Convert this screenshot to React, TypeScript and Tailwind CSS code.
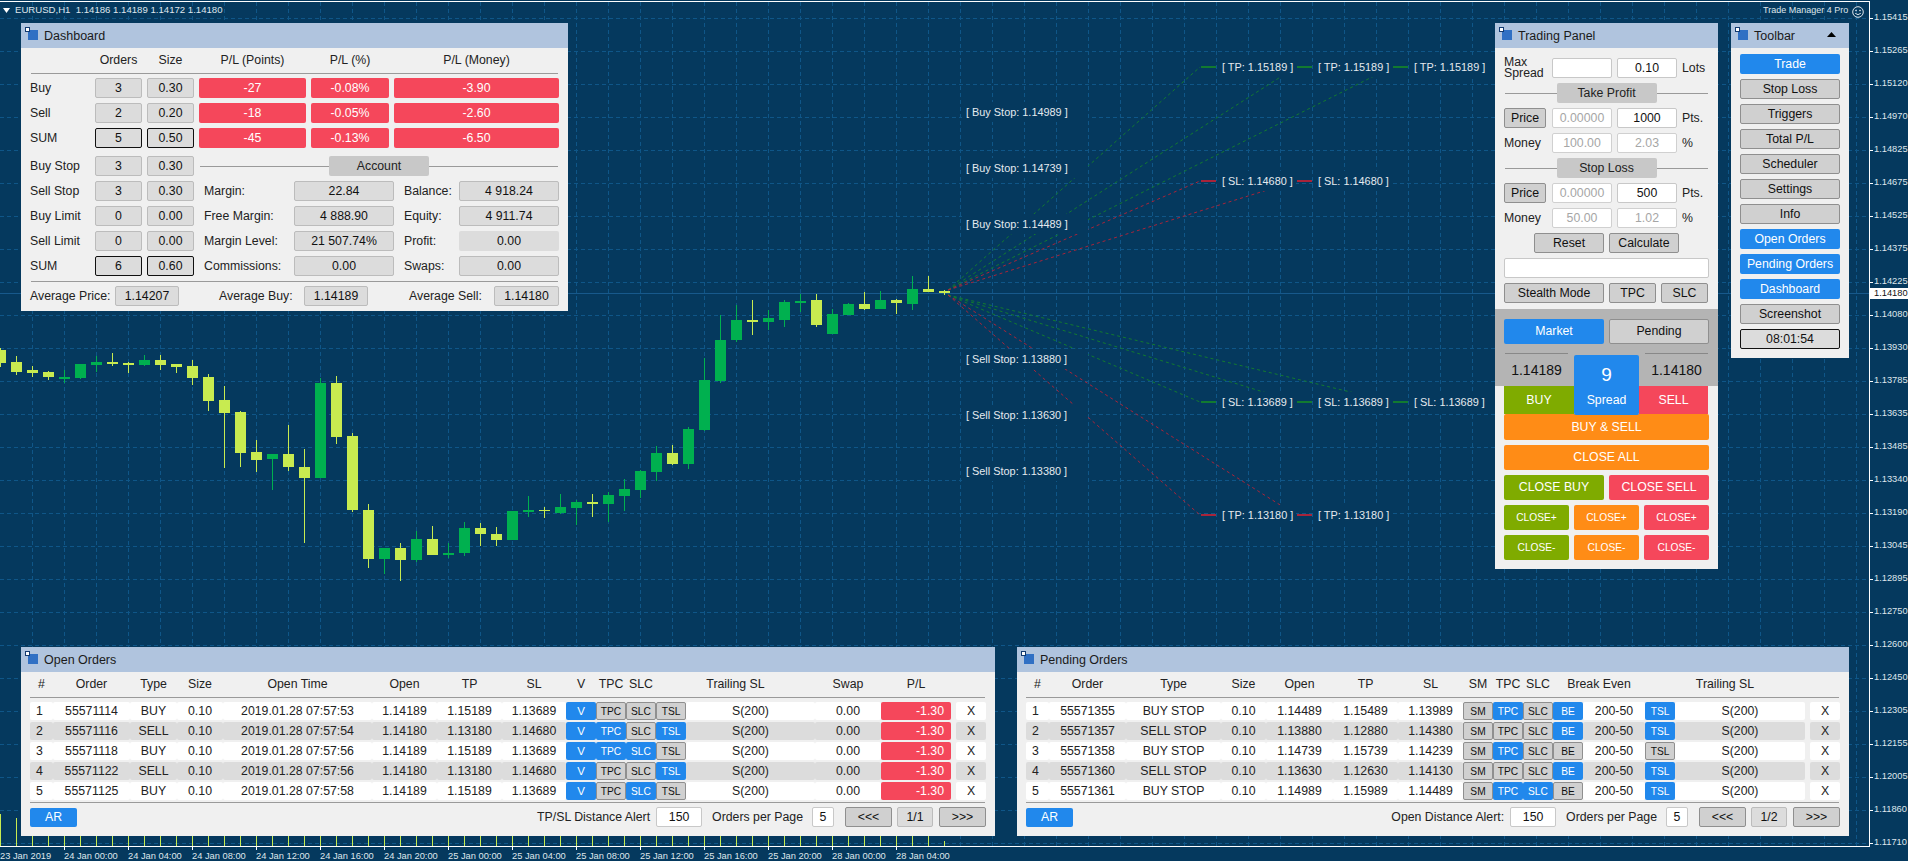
import type { ReactNode } from "react";

const BLUE = "bg-[#2188ec] text-white";
const GRAY_BTN = "bg-[#d0d0d0] border border-[#8f8f8f] text-[#111]";
const CELL = "bg-[#dcdcdc] border border-[#bcbcbc] text-[#111]";
const SUM = "bg-[#dcdcdc] border border-[#111] text-[#111]";
const RED = "bg-[#f5475b] text-white";
const INPUT = "bg-white border border-[#c8c8c8] text-[#111]";
const DIM = "bg-white border border-[#d0d0d0] text-[#a6a6a6]";

const BOX = "flex items-center justify-center rounded-[2px] min-w-0 whitespace-nowrap";

function Box({ c, children }: { c: string; children?: ReactNode }) {
  return <div className={`${BOX} ${c}`}>{children}</div>;
}

// [color, wickTop, bodyTop, bodyBottom, wickBottom], one candle every 16px
const candles: [string, number, number, number, number][] = [
  ["y", 348, 350, 363, 367], ["y", 356, 362, 372, 375], ["y", 366, 370, 373, 377], ["y", 371, 372, 377, 380],
  ["g", 370, 377, 379, 383], ["g", 364, 364, 378, 379], ["g", 356, 362, 365, 372], ["y", 353, 362, 364, 366],
  ["y", 362, 363, 365, 373], ["g", 355, 360, 365, 366], ["y", 355, 360, 365, 370], ["y", 364, 364, 367, 373],
  ["y", 360, 366, 378, 385], ["y", 374, 377, 401, 411], ["y", 386, 400, 413, 468], ["y", 411, 412, 453, 467],
  ["y", 440, 452, 460, 472], ["g", 454, 454, 459, 490], ["y", 425, 454, 467, 471], ["y", 449, 467, 478, 543],
  ["g", 378, 383, 478, 478], ["y", 376, 383, 437, 444], ["y", 433, 436, 510, 512], ["y", 504, 510, 559, 568],
  ["g", 548, 548, 559, 574], ["y", 543, 548, 560, 581], ["g", 531, 539, 560, 562], ["y", 526, 539, 555, 555],
  ["g", 543, 553, 555, 558], ["g", 522, 528, 553, 556], ["y", 523, 528, 534, 546], ["y", 527, 534, 540, 546],
  ["g", 511, 511, 540, 540], ["g", 496, 510, 512, 517], ["y", 507, 510, 511, 518], ["g", 494, 507, 513, 514],
  ["g", 500, 502, 508, 525], ["y", 494, 502, 504, 517], ["g", 492, 495, 504, 522], ["g", 479, 489, 496, 511],
  ["g", 470, 471, 490, 498], ["g", 446, 453, 472, 481], ["y", 445, 453, 464, 465], ["g", 427, 429, 464, 469],
  ["g", 358, 380, 430, 431], ["g", 315, 340, 381, 383], ["g", 305, 320, 340, 342], ["y", 300, 320, 322, 335],
  ["g", 310, 318, 322, 330], ["g", 300, 302, 320, 327], ["g", 294, 301, 303, 312], ["y", 294, 300, 325, 327],
  ["g", 309, 314, 334, 334], ["g", 303, 304, 315, 315], ["y", 292, 304, 309, 310], ["g", 291, 300, 309, 309],
  ["y", 299, 300, 303, 314], ["g", 276, 289, 304, 310], ["y", 276, 289, 292, 292], ["y", 290, 291, 293, 295],
];

const prices = [
  "1.15415", "1.15265", "1.15120", "1.14970", "1.14825", "1.14675", "1.14525", "1.14375", "1.14225",
  "1.14080", "1.13930", "1.13785", "1.13635", "1.13485", "1.13340", "1.13190", "1.13045", "1.12895",
  "1.12750", "1.12600", "1.12450", "1.12305", "1.12155", "1.12005", "1.11860", "1.11710",
];

const times = [
  "24 Jan 00:00", "24 Jan 04:00", "24 Jan 08:00", "24 Jan 12:00", "24 Jan 16:00", "24 Jan 20:00", "25 Jan 00:00",
  "25 Jan 04:00", "25 Jan 08:00", "25 Jan 12:00", "25 Jan 16:00", "25 Jan 20:00", "28 Jan 00:00", "28 Jan 04:00",
];

const GREEN_LINE = "#127a30";
const RED_LINE = "#a8243a";

const connectors: [number, number, number, number, string][] = [
  [948, 290, 1200, 67, GREEN_LINE], [948, 290, 1296, 67, GREEN_LINE], [948, 290, 1392, 67, GREEN_LINE],
  [948, 290, 1200, 181, RED_LINE], [948, 290, 1296, 181, RED_LINE],
  [948, 295, 1200, 402, GREEN_LINE], [948, 295, 1296, 402, GREEN_LINE], [948, 295, 1392, 402, GREEN_LINE],
  [948, 295, 1200, 515, RED_LINE], [948, 295, 1296, 515, RED_LINE],
];

const stubs: [number, number, string][] = [
  [1201, 67, GREEN_LINE], [1297, 67, GREEN_LINE], [1393, 67, GREEN_LINE],
  [1201, 181, RED_LINE], [1297, 181, RED_LINE],
  [1201, 402, GREEN_LINE], [1297, 402, GREEN_LINE], [1393, 402, GREEN_LINE],
  [1201, 515, RED_LINE], [1297, 515, RED_LINE],
];

const levelLabels: [number, number, number, string][] = [
  [966, 112, 122, "[ Buy Stop: 1.14989 ]"], [966, 168, 122, "[ Buy Stop: 1.14739 ]"], [966, 224, 122, "[ Buy Stop: 1.14489 ]"],
  [966, 359, 122, "[ Sell Stop: 1.13880 ]"], [966, 415, 122, "[ Sell Stop: 1.13630 ]"], [966, 471, 122, "[ Sell Stop: 1.13380 ]"],
  [1222, 67, 74, "[ TP: 1.15189 ]"], [1318, 67, 74, "[ TP: 1.15189 ]"], [1414, 67, 74, "[ TP: 1.15189 ]"],
  [1222, 181, 74, "[ SL: 1.14680 ]"], [1318, 181, 74, "[ SL: 1.14680 ]"],
  [1222, 402, 74, "[ SL: 1.13689 ]"], [1318, 402, 74, "[ SL: 1.13689 ]"], [1414, 402, 74, "[ SL: 1.13689 ]"],
  [1222, 515, 74, "[ TP: 1.13180 ]"], [1318, 515, 74, "[ TP: 1.13180 ]"],
];

function Chart() {
  const vx = Array.from({ length: 58 }, (_, i) => 32 * (i + 1));
  const hy = Array.from({ length: 26 }, (_, i) => 18 + 33 * i);
  return (
    <svg className="absolute top-0 left-0" width={1908} height={861} shapeRendering="crispEdges">
      {vx.map((x) => (
        <line key={x} x1={x + 0.5} y1={2} x2={x + 0.5} y2={846} stroke="#0f5688" strokeDasharray="4 3" />
      ))}
      {hy.map((y) => (
        <line key={y} x1={0} y1={y + 0.5} x2={1869} y2={y + 0.5} stroke="#0f5688" strokeDasharray="4 3" />
      ))}
      <rect x={0} y={293} width={1869} height={1} fill="#17598c" />
      {candles.map((_, i) => (
        <rect
          key={i}
          x={i * 16}
          y={i === 0 ? 814 : i === 1 ? 818 : i === 59 ? 841 : 830}
          width={1}
          height={i === 0 ? 32 : i === 1 ? 28 : i === 59 ? 5 : 16}
          fill="#c8eb50"
        />
      ))}
      <g shapeRendering="auto">
        {connectors.map(([x1, y1, x2, y2, color], i) => (
          <line key={i} x1={x1} y1={y1} x2={x2} y2={y2} stroke={color} strokeDasharray="3 3" />
        ))}
      </g>
      {stubs.map(([x, y, color], i) => (
        <rect key={i} x={x} y={y - 1} width={15} height={2} fill={color} />
      ))}
      {candles.map(([col, wt, bt, bb, wb], i) => {
        const fill = col === "y" ? "#c8eb50" : "#00b04f";
        const c = i * 16;
        return (
          <g key={i}>
            <rect x={c} y={wt} width={1} height={wb - wt} fill={fill} />
            <rect x={c - 5} y={bt} width={11} height={Math.max(bb - bt, 1)} fill={fill} />
          </g>
        );
      })}
      <rect x={0} y={1} width={1870} height={1} fill="#ffffff" />
      <rect x={1869} y={1} width={1} height={846} fill="#ffffff" />
      <rect x={0} y={846} width={1870} height={1} fill="#ffffff" />
      {hy.map((y) => (
        <rect key={y} x={1870} y={y} width={3} height={1} fill="#ffffff" />
      ))}
      {times.map((_, i) => (
        <rect key={i} x={64 * (i + 1)} y={847} width={1} height={3} fill="#ffffff" />
      ))}
    </svg>
  );
}

function AxisText() {
  return (
    <div className="text-[9.3px] text-[#dfe6ec]">
      {prices.map((p, i) => (
        <div key={p} className="absolute left-[1874px] leading-[12px]" style={{ top: 11 + 33 * i }}>
          {p}
        </div>
      ))}
      <div className="absolute left-[1870px] top-[288px] w-[38px] h-[11px] bg-white text-[#111] leading-[11px] pl-[4px]">1.14180</div>
      <div className="absolute left-0 top-[850px] leading-[12px]">23 Jan 2019</div>
      {times.map((t, i) => (
        <div key={t} className="absolute top-[850px] leading-[12px]" style={{ left: 64 * (i + 1) }}>
          {t}
        </div>
      ))}
    </div>
  );
}

function LevelLabels() {
  return (
    <div className="text-[10.9px] text-[#e4e9ee]">
      {levelLabels.map(([x, y, w, t], i) => (
        <div
          key={i}
          className="absolute h-[20px] bg-[#05395e] flex items-center whitespace-nowrap"
          style={{ left: x - 4, top: y - 10, width: w + 4 }}
        >
          <span className="pl-[4px]">{t}</span>
        </div>
      ))}
    </div>
  );
}

function WinIcon() {
  return (
    <svg width={14} height={14} className="absolute left-[4px] top-[4px]">
      <rect x={3} y={3} width={10} height={10} fill="#3070c4" />
      <rect x={0.5} y={0.5} width={4} height={4} fill="#ffffff" stroke="#123a70" />
    </svg>
  );
}

function Win({ c, title, children, extra }: { c: string; title: string; children: ReactNode; extra?: ReactNode }) {
  return (
    <div className={`absolute bg-[#f0f0f0] ${c}`}>
      <div className="relative h-[25px] bg-[#b0c4de] flex items-center pl-[23px] pt-px text-[12.5px] text-[#1a1a1a]">
        <WinIcon />
        {title}
        {extra}
      </div>
      {children}
    </div>
  );
}

function Rule({ c }: { c: string }) {
  return <div className={`h-px bg-[#9a9a9a] ${c}`} />;
}

function Dashboard() {
  const top: [string, string, string, string, string, string][] = [
    ["Buy", "3", "0.30", "-27", "-0.08%", "-3.90"],
    ["Sell", "2", "0.20", "-18", "-0.05%", "-2.60"],
    ["SUM", "5", "0.50", "-45", "-0.13%", "-6.50"],
  ];
  const left: [string, string, string][] = [
    ["Buy Stop", "3", "0.30"],
    ["Sell Stop", "3", "0.30"],
    ["Buy Limit", "0", "0.00"],
    ["Sell Limit", "0", "0.00"],
    ["SUM", "6", "0.60"],
  ];
  const account: [string, string, string, string][] = [
    ["Margin:", "22.84", "Balance:", "4 918.24"],
    ["Free Margin:", "4 888.90", "Equity:", "4 911.74"],
    ["Margin Level:", "21 507.74%", "Profit:", "0.00"],
    ["Commissions:", "0.00", "Swaps:", "0.00"],
  ];
  return (
    <Win c="left-[21px] top-[23px] w-[547px] h-[288px]" title="Dashboard">
      <div className="pl-[9px]">
        <div className="grid grid-cols-[60px_47px_47px_107px_78px_165px] gap-x-[5px] h-[25px] items-center text-center text-[#222]">
          <div />
          <div>Orders</div>
          <div>Size</div>
          <div>P/L (Points)</div>
          <div>P/L (%)</div>
          <div>P/L (Money)</div>
        </div>
        <Rule c="ml-[1px] w-[527px]" />
        <div className="grid grid-cols-[60px_47px_47px_107px_78px_165px] gap-x-[5px] gap-y-[5px] auto-rows-[20px] items-stretch mt-[4px]">
          {top.map((r) => (
            <div key={r[0]} className="contents">
              <div className="flex items-center">{r[0]}</div>
              <Box c={r[0] === "SUM" ? SUM : CELL}>{r[1]}</Box>
              <Box c={r[0] === "SUM" ? SUM : CELL}>{r[2]}</Box>
              <Box c={RED}>{r[3]}</Box>
              <Box c={RED}>{r[4]}</Box>
              <Box c={RED}>{r[5]}</Box>
            </div>
          ))}
        </div>
        <div className="flex gap-x-[5px] mt-[8px]">
          <div className="grid grid-cols-[60px_47px_47px] gap-x-[5px] gap-y-[5px] auto-rows-[20px]">
            {left.map((r, i) => (
              <div key={i} className="contents">
                <div className="flex items-center">{r[0]}</div>
                <Box c={r[0] === "SUM" ? SUM : CELL}>{r[1]}</Box>
                <Box c={r[0] === "SUM" ? SUM : CELL}>{r[2]}</Box>
              </div>
            ))}
          </div>
          <div className="w-[360px] flex flex-col gap-y-[5px]">
            <div className="h-[20px] flex items-center px-px">
              <div className="flex-1 h-px bg-[#9a9a9a]" />
              <div className="w-[100px] h-[20px] rounded-[2px] bg-[#c8c8c8] flex items-center justify-center">Account</div>
              <div className="flex-1 h-px bg-[#9a9a9a]" />
            </div>
            {account.map((r) => (
              <div key={r[0]} className="grid grid-cols-[90px_100px_65px_100px] pl-[5px] h-[20px]">
                <div className="flex items-center">{r[0]}</div>
                <Box c={CELL}>{r[1]}</Box>
                <div className="flex items-center pl-[10px]">{r[2]}</div>
                <Box c={r[2] === "Profit:" ? "bg-[#dcdcdc] text-[#111]" : CELL}>{r[3]}</Box>
              </div>
            ))}
          </div>
        </div>
        <Rule c="ml-[1px] w-[527px] mt-[5px]" />
        <div className="grid grid-cols-[85px_64px_125px_64px_126px_65px] h-[20px] mt-[4px]">
          <div className="flex items-center">Average Price:</div>
          <Box c={CELL}>1.14207</Box>
          <div className="flex items-center pl-[40px]">Average Buy:</div>
          <Box c={CELL}>1.14189</Box>
          <div className="flex items-center pl-[41px]">Average Sell:</div>
          <Box c={CELL}>1.14180</Box>
        </div>
      </div>
    </Win>
  );
}

function HeadLine({ label }: { label: string }) {
  return (
    <div className="flex items-center h-[20px] w-[203px] ml-px">
      <div className="flex-1 h-px bg-[#9a9a9a]" />
      <div className="w-[100px] h-[20px] rounded-[2px] bg-[#c8c8c8] flex items-center justify-center">{label}</div>
      <div className="flex-1 h-px bg-[#9a9a9a]" />
    </div>
  );
}

function InputRow({ first, a, b, dimA, dimB, unit }: { first: ReactNode; a: string; b: string; dimA?: boolean; dimB?: boolean; unit: string }) {
  return (
    <div className="flex h-[20px]">
      <div className="w-[48px] flex items-center">{first}</div>
      <Box c={`w-[60px] ${dimA ? DIM : INPUT}`}>{a}</Box>
      <Box c={`w-[60px] ml-[5px] ${dimB ? DIM : INPUT}`}>{b}</Box>
      <div className="ml-[5px] flex items-center">{unit}</div>
    </div>
  );
}

function TradingPanel() {
  const price = <Box c={`w-[42px] h-[20px] ${GRAY_BTN}`}>Price</Box>;
  return (
    <Win c="left-[1495px] top-[23px] w-[223px] h-[546px]" title="Trading Panel">
      <div className="pl-[9px] pt-[10px] flex flex-col gap-y-[5px]">
        <InputRow first={<div className="leading-[11px]">Max<br />Spread</div>} a="" b="0.10" unit="Lots" />
        <HeadLine label="Take Profit" />
        <InputRow first={price} a="0.00000" b="1000" dimA unit="Pts." />
        <InputRow first="Money" a="100.00" b="2.03" dimA dimB unit="%" />
        <HeadLine label="Stop Loss" />
        <InputRow first={price} a="0.00000" b="500" dimA unit="Pts." />
        <InputRow first="Money" a="50.00" b="1.02" dimA dimB unit="%" />
        <div className="flex gap-x-[5px] h-[20px] pl-[30px]">
          <Box c={`w-[70px] ${GRAY_BTN}`}>Reset</Box>
          <Box c={`w-[70px] ${GRAY_BTN}`}>Calculate</Box>
        </div>
        <Box c={`w-[205px] h-[20px] ${INPUT}`} />
        <div className="flex gap-x-[5px] h-[20px]">
          <Box c={`w-[100px] ${GRAY_BTN}`}>Stealth Mode</Box>
          <Box c={`w-[47px] ${GRAY_BTN}`}>TPC</Box>
          <Box c={`w-[47px] ${GRAY_BTN}`}>SLC</Box>
        </div>
      </div>
      <div className="mt-[6px] h-[77px] bg-[#b4b4b4] pt-[10px]">
        <div className="flex gap-x-[5px] h-[25px] pl-[9px]">
          <Box c={`w-[100px] ${BLUE}`}>Market</Box>
          <Box c={`w-[100px] ${GRAY_BTN}`}>Pending</Box>
        </div>
        <div className="flex justify-between px-[10px] mt-[9px]">
          <div className="w-[63px] border-t border-[#888] text-center text-[14px] leading-[32px] text-[#111]">1.14189</div>
          <div className="w-[63px] border-t border-[#888] text-center text-[14px] leading-[32px] text-[#111]">1.14180</div>
        </div>
      </div>
      <div className="flex justify-between pl-[9px] pr-[10px] h-[28px]">
        <div className={`w-[70px] flex items-center justify-center bg-[#7fab00] text-white`}>BUY</div>
        <div className={`w-[69px] flex items-center justify-center ${RED}`}>SELL</div>
      </div>
      <div className="pl-[9px] flex flex-col gap-y-[5px]">
        <Box c="w-[205px] h-[26px] bg-[#ff8c16] text-white">BUY &amp; SELL</Box>
        <Box c="w-[205px] h-[25px] bg-[#ff8c16] text-white">CLOSE ALL</Box>
        <div className="flex gap-x-[5px] h-[25px]">
          <Box c="w-[100px] bg-[#7fab00] text-white">CLOSE BUY</Box>
          <Box c={`w-[100px] ${RED}`}>CLOSE SELL</Box>
        </div>
        {["CLOSE+", "CLOSE-"].map((t) => (
          <div key={t} className="flex gap-x-[5px] h-[25px] text-[10.2px]">
            <Box c="w-[65px] bg-[#7fab00] text-white">{t}</Box>
            <Box c="w-[65px] bg-[#ff8c16] text-white">{t}</Box>
            <Box c={`w-[65px] ${RED}`}>{t}</Box>
          </div>
        ))}
      </div>
      <div className="absolute left-[79px] top-[332px] w-[65px] h-[60px] rounded-[2px] bg-[#2188ec] text-white flex flex-col items-center">
        <div className="text-[19px] leading-[22px] mt-[9px]">9</div>
        <div className="leading-[14px] mt-[7px]">Spread</div>
      </div>
    </Win>
  );
}

function Toolbar() {
  const items: [string, boolean][] = [
    ["Trade", true], ["Stop Loss", false], ["Triggers", false], ["Total P/L", false], ["Scheduler", false], ["Settings", false],
    ["Info", false], ["Open Orders", true], ["Pending Orders", true], ["Dashboard", true], ["Screenshot", false],
  ];
  return (
    <Win
      c="left-[1731px] top-[23px] w-[118px] h-[335px]"
      title="Toolbar"
      extra={
        <svg width={9} height={5} className="absolute left-[96px] top-[9px]">
          <polygon points="0,5 4.5,0 9,5" fill="#000" />
        </svg>
      }
    >
      <div className="pl-[9px] pt-[6px] flex flex-col gap-y-[5px]">
        {items.map(([t, on]) => (
          <Box key={t} c={`w-[100px] h-[20px] ${on ? BLUE : GRAY_BTN}`}>{t}</Box>
        ))}
        <Box c={`w-[100px] h-[20px] ${SUM}`}>08:01:54</Box>
      </div>
    </Win>
  );
}

const SMALL_ON = "bg-[#2188ec] text-white text-[10.2px]";
const SMALL_OFF = "bg-[#d0d0d0] border border-[#8f8f8f] text-[#111] text-[10.2px]";

function Small({ on, t }: { on: boolean; t: string }) {
  return <Box c={on ? SMALL_ON : SMALL_OFF}>{t}</Box>;
}

function Txt({ bg, c, children }: { bg: string; c?: string; children: ReactNode }) {
  return <div className={`${BOX} ${bg} ${c ?? ""}`}>{children}</div>;
}

function Footer({ alert, page }: { alert: string; page: string }) {
  return (
    <div className="flex items-center mt-[4px] h-[20px]">
      <Box c={`w-[47px] h-[19px] ${BLUE}`}>AR</Box>
      <div className="ml-auto flex items-center h-[20px]">
        <div className="mr-[6px]">{alert}</div>
        <Box c={`w-[46px] h-[20px] ${INPUT}`}>150</Box>
        <div className="ml-[10px] mr-[9px]">Orders per Page</div>
        <Box c={`w-[22px] h-[20px] ${INPUT}`}>5</Box>
        <Box c={`w-[47px] h-[20px] ml-[11px] ${GRAY_BTN}`}>&lt;&lt;&lt;</Box>
        <Box c={`w-[36px] h-[20px] ml-[5px] ${CELL}`}>{page}</Box>
        <Box c={`w-[47px] h-[20px] ml-[6px] ${GRAY_BTN}`}>&gt;&gt;&gt;</Box>
      </div>
    </div>
  );
}

const openCols = "grid grid-cols-[23px_77px_47px_46px_149px_65px_65px_64px_30px_30px_30px_30px_129px_66px_70px_5px_30px]";

function OpenOrders() {
  const rows: [string, string, string, string, string, string, string, boolean, boolean, boolean][] = [
    ["55571114", "BUY", "2019.01.28 07:57:53", "1.14189", "1.15189", "1.13689", "1", false, false, false],
    ["55571116", "SELL", "2019.01.28 07:57:54", "1.14180", "1.13180", "1.14680", "2", true, false, true],
    ["55571118", "BUY", "2019.01.28 07:57:56", "1.14189", "1.15189", "1.13689", "3", true, true, false],
    ["55571122", "SELL", "2019.01.28 07:57:56", "1.14180", "1.13180", "1.14680", "4", false, false, true],
    ["55571125", "BUY", "2019.01.28 07:57:58", "1.14189", "1.15189", "1.13689", "5", false, true, false],
  ];
  return (
    <Win c="left-[21px] top-[647px] w-[974px] h-[189px]" title="Open Orders">
      <div className="pl-[9px] w-[965px]">
        <div className={`${openCols} h-[25px] items-center text-center text-[#222]`}>
          <div>#</div>
          <div>Order</div>
          <div>Type</div>
          <div>Size</div>
          <div>Open Time</div>
          <div>Open</div>
          <div>TP</div>
          <div>SL</div>
          <div>V</div>
          <div>TPC</div>
          <div>SLC</div>
          <div />
          <div className="pr-[30px]">Trailing SL</div>
          <div>Swap</div>
          <div>P/L</div>
          <div />
          <div />
        </div>
        <Rule c="w-[955px]" />
        <div className="flex flex-col gap-y-[4px] mt-[4px]">
          {rows.map((r, i) => {
            const bg = i % 2 ? "bg-[#dcdcdc]" : "bg-white";
            return (
              <div key={r[0]} className={`${openCols} h-[16px]`}>
                <Txt bg={bg} c="!justify-start pl-[6px]">{r[6]}</Txt>
                <Txt bg={bg}>{r[0]}</Txt>
                <Txt bg={bg}>{r[1]}</Txt>
                <Txt bg={bg}>0.10</Txt>
                <Txt bg={bg}>{r[2]}</Txt>
                <Txt bg={bg}>{r[3]}</Txt>
                <Txt bg={bg}>{r[4]}</Txt>
                <Txt bg={bg}>{r[5]}</Txt>
                <Box c="bg-[#2188ec] text-white text-[11.5px]">V</Box>
                <Small on={r[7]} t="TPC" />
                <Small on={r[8]} t="SLC" />
                <Small on={r[9]} t="TSL" />
                <Txt bg={bg}>S(200)</Txt>
                <Txt bg={bg}>0.00</Txt>
                <div className={`${BOX} ${RED} !justify-end pr-[7px]`}>-1.30</div>
                <div />
                <Txt bg={bg}>X</Txt>
              </div>
            );
          })}
        </div>
        <Rule c="w-[955px] mt-[4px]" />
        <Footer alert="TP/SL Distance Alert" page="1/1" />
      </div>
    </Win>
  );
}

const pendCols = "grid grid-cols-[23px_77px_95px_45px_67px_65px_65px_30px_30px_30px_30px_62px_30px_130px_5px_30px]";

function PendingOrders() {
  const rows: [string, string, string, string, string, boolean, boolean, boolean, boolean][] = [
    ["55571355", "BUY STOP", "1.14489", "1.15489", "1.13989", true, false, true, true],
    ["55571357", "SELL STOP", "1.13880", "1.12880", "1.14380", false, false, true, true],
    ["55571358", "BUY STOP", "1.14739", "1.15739", "1.14239", true, false, false, false],
    ["55571360", "SELL STOP", "1.13630", "1.12630", "1.14130", false, false, true, true],
    ["55571361", "BUY STOP", "1.14989", "1.15989", "1.14489", true, true, false, true],
  ];
  return (
    <Win c="left-[1017px] top-[647px] w-[832px] h-[189px]" title="Pending Orders">
      <div className="pl-[9px] w-[823px]">
        <div className={`${pendCols} h-[25px] items-center text-center text-[#222]`}>
          <div>#</div>
          <div>Order</div>
          <div>Type</div>
          <div>Size</div>
          <div>Open</div>
          <div>TP</div>
          <div>SL</div>
          <div>SM</div>
          <div>TPC</div>
          <div>SLC</div>
          <div className="col-span-2">Break Even</div>
          <div className="col-span-2">Trailing SL</div>
          <div />
          <div />
        </div>
        <Rule c="w-[813px]" />
        <div className="flex flex-col gap-y-[4px] mt-[4px]">
          {rows.map((r, i) => {
            const bg = i % 2 ? "bg-[#dcdcdc]" : "bg-white";
            return (
              <div key={r[0]} className={`${pendCols} h-[16px]`}>
                <Txt bg={bg} c="!justify-start pl-[6px]">{i + 1}</Txt>
                <Txt bg={bg}>{r[0]}</Txt>
                <Txt bg={bg}>{r[1]}</Txt>
                <Txt bg={bg}>0.10</Txt>
                <Txt bg={bg}>{r[2]}</Txt>
                <Txt bg={bg}>{r[3]}</Txt>
                <Txt bg={bg}>{r[4]}</Txt>
                <Small on={false} t="SM" />
                <Small on={r[5]} t="TPC" />
                <Small on={r[6]} t="SLC" />
                <Small on={r[7]} t="BE" />
                <Txt bg={bg}>200-50</Txt>
                <Small on={r[8]} t="TSL" />
                <Txt bg={bg}>S(200)</Txt>
                <div />
                <Txt bg={bg}>X</Txt>
              </div>
            );
          })}
        </div>
        <Rule c="w-[813px] mt-[4px]" />
        <Footer alert="Open Distance Alert:" page="1/2" />
      </div>
    </Win>
  );
}

export default function App() {
  return (
    <div className="relative w-[1908px] h-[861px] overflow-hidden bg-[#05395e] font-['Liberation_Sans',sans-serif] text-[12.3px] text-[#222]">
      <Chart />
      <LevelLabels />
      <AxisText />
      <div className="absolute left-[15px] top-[4px] text-[9.6px] leading-[12px] text-[#dfe6ec] whitespace-pre">EURUSD,H1  1.14186 1.14189 1.14172 1.14180</div>
      <svg width={7} height={5} className="absolute left-[3px] top-[8px]">
        <polygon points="0,0 7,0 3.5,5" fill="#ffffff" />
      </svg>
      <div className="absolute left-[1763px] top-[4px] text-[9px] leading-[13px] text-[#dfe6ec] whitespace-nowrap">Trade Manager 4 Pro</div>
      <svg width={12} height={12} viewBox="0 0 12 12" className="absolute left-[1852px] top-[6px]" fill="none" stroke="#dfe6ec">
        <circle cx={6} cy={6} r={5.3} />
        <circle cx={4} cy={4.5} r={0.5} />
        <circle cx={8} cy={4.5} r={0.5} />
        <path d="M3.2 7.3 Q6 10 8.8 7.3" />
      </svg>
      <Dashboard />
      <TradingPanel />
      <Toolbar />
      <OpenOrders />
      <PendingOrders />
    </div>
  );
}
